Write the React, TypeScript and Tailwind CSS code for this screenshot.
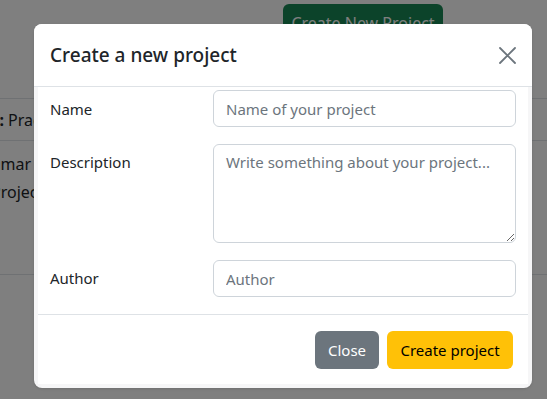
const font = { fontFamily: '"Noto Sans", "Open Sans", sans-serif' }

function Backdrop() {
  return (
    <div className="absolute inset-0 bg-white text-[#212529]">
      <div className="flex h-[44px] justify-end pr-[104px] pt-[4px]">
        <div className="flex h-[38px] w-[160px] items-center justify-center rounded-md bg-[#198754] text-[16px] text-white">
          Create New Project
        </div>
      </div>
      <div className="mt-[54px] border-t border-[#dee2e6]">
        <div className="flex h-[41px] w-[34px] items-center overflow-hidden whitespace-nowrap text-[16px]">
          <div className="-ml-[54px]">
            <span className="font-bold">Owner:</span> Practice
          </div>
        </div>
        <div className="border-t border-[#dee2e6] pt-[9px] text-[16px] leading-[28px]">
          <div className="w-[34px] overflow-hidden whitespace-nowrap">
            <div className="-ml-[12px]">Omar</div>
          </div>
          <div className="w-[34px] overflow-hidden whitespace-nowrap">
            <div className="-ml-[9px]">Project</div>
          </div>
        </div>
      </div>
      <div className="mt-[68px] border-t border-[#dee2e6]" />
    </div>
  )
}

export default function App() {
  return (
    <div className="relative h-[399px] w-[547px] overflow-hidden" style={font}>
      <Backdrop />
      <div className="absolute inset-0 bg-black/50" />

      <div className="absolute left-[34px] top-[24px] w-[498px] overflow-hidden rounded-lg bg-[#f6f6f7] text-[#212529] shadow-sm">
        <div className="flex h-[63px] items-center justify-between border-b border-[#dee2e6] bg-white pl-4 pr-[16px]">
          <h5 className="text-[19px] font-medium">Create a new project</h5>
          <svg width="17" height="17" viewBox="0 0 17 17" className="text-[#6c757d]">
            <path d="M1 1L16 16M16 1L1 16" stroke="currentColor" strokeWidth="1.8" strokeLinecap="round" />
          </svg>
        </div>

        <div className="mx-[4px] mb-[4px] bg-white">
          <div className="grid grid-cols-[163px_1fr] gap-y-[17px] px-3 pt-[3px] pb-[17px] text-[15px]">
            <label className="flex h-[36px] items-center pt-[2px]">Name</label>
            <input
              className="h-[37px] rounded-md border border-[#ced4da] px-3 text-[15px] placeholder:text-[#6c757d] outline-none"
              placeholder="Name of your project"
            />

            <label className="pt-[7px]">Description</label>
            <textarea
              className="h-[99px] rounded-md border border-[#ced4da] px-3 py-[6px] text-[15px] placeholder:text-[#6c757d] outline-none"
              placeholder="Write something about your project..."
            />

            <label className="flex h-[37px] items-center">Author</label>
            <input
              className="h-[37px] rounded-md border border-[#ced4da] px-3 text-[15px] placeholder:text-[#6c757d] outline-none"
              placeholder="Author"
            />
          </div>

          <div className="flex justify-end gap-2 border-t border-[#dee2e6] px-[15px] pt-[16px] pb-[15px] text-[15px]">
            <button className="h-[38px] w-[64px] rounded-md bg-[#6c757d] text-white">Close</button>
            <button className="h-[38px] w-[126px] rounded-md bg-[#ffc107] text-black">Create project</button>
          </div>
        </div>
      </div>
    </div>
  )
}
